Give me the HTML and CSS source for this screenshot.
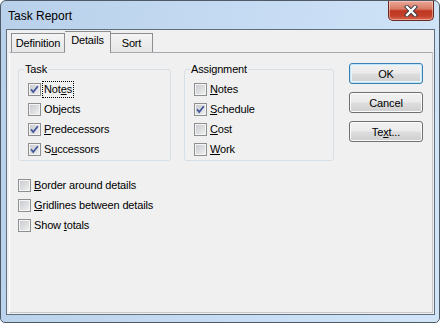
FILE: index.html
```html
<!DOCTYPE html>
<html>
<head>
<meta charset="utf-8">
<link rel="stylesheet" href="styles.css">
</head>
<body>
<div class="window">
  <div class="titlebar">
    <span class="title">Task Report</span>
    <div class="close">
      <svg width="14" height="12" viewBox="0 0 14 12">
        <path d="M3 2 L11 10 M11 2 L3 10" stroke="#3a3a44" stroke-width="4.2" stroke-linecap="square" fill="none"/>
        <path d="M3 2 L11 10 M11 2 L3 10" stroke="#ffffff" stroke-width="2.3" stroke-linecap="square" fill="none"/>
      </svg>
    </div>
  </div>
  <div class="client">
    <div class="tabs">
      <div class="tab t-def">Definition</div>
      <div class="tab selected t-det">Details</div>
      <div class="tab t-sort">Sort</div>
    </div>
    <div class="panel">
      <div class="top">
        <fieldset class="group task">
          <legend>Task</legend>
          <div class="row"><span class="cb"><svg viewBox="0 0 11 11" width="11" height="11"><path class="chk" d="M2 5.3 L4.2 8 L8.8 2.2"/></svg></span><span class="lbl focus">Not<u>e</u>s</span></div>
          <div class="row"><span class="cb"></span><span class="lbl">Ob<u>j</u>ects</span></div>
          <div class="row"><span class="cb"><svg viewBox="0 0 11 11" width="11" height="11"><path class="chk" d="M2 5.3 L4.2 8 L8.8 2.2"/></svg></span><span class="lbl"><u>P</u>redecessors</span></div>
          <div class="row"><span class="cb"><svg viewBox="0 0 11 11" width="11" height="11"><path class="chk" d="M2 5.3 L4.2 8 L8.8 2.2"/></svg></span><span class="lbl">S<u>u</u>ccessors</span></div>
        </fieldset>
        <fieldset class="group assign">
          <legend>Assignment</legend>
          <div class="row"><span class="cb"></span><span class="lbl"><u>N</u>otes</span></div>
          <div class="row"><span class="cb"><svg viewBox="0 0 11 11" width="11" height="11"><path class="chk" d="M2 5.3 L4.2 8 L8.8 2.2"/></svg></span><span class="lbl"><u>S</u>chedule</span></div>
          <div class="row"><span class="cb"></span><span class="lbl"><u>C</u>ost</span></div>
          <div class="row"><span class="cb"></span><span class="lbl"><u>W</u>ork</span></div>
        </fieldset>
        <div class="buttons">
          <button class="btn default">OK</button>
          <button class="btn">Cancel</button>
          <button class="btn">Te<u>x</u>t...</button>
        </div>
      </div>
      <div class="options">
        <div class="row"><span class="cb"></span><span class="lbl"><u>B</u>order around details</span></div>
        <div class="row"><span class="cb"></span><span class="lbl"><u>G</u>ridlines between details</span></div>
        <div class="row"><span class="cb"></span><span class="lbl">Show <u>t</u>otals</span></div>
      </div>
    </div>
  </div>
</div>
</body>
</html>
```
FILE: styles.css
```css
html, body {
  margin: 0;
  padding: 0;
  background: #ffffff;
}

.window {
  box-sizing: border-box;
  width: 440px;
  height: 323px;
  border: 1px solid #4e5a66;
  border-radius: 6px 6px 5px 5px;
  background: linear-gradient(100deg, #b8d0ea 0%, #c4daf2 45%, #d2e5f8 100%);
  padding: 0 4px 7px 5px;
  display: flex;
  flex-direction: column;
  font-family: "Liberation Sans", Arial, sans-serif;
  font-size: 11px;
  letter-spacing: -0.15px;
  color: #000;
}

.titlebar {
  height: 28px;
  display: flex;
  justify-content: space-between;
  align-items: flex-start;
}

.title {
  font-size: 12px;
  line-height: 15px;
  margin-top: 8px;
  padding-left: 2px;
  letter-spacing: 0;
  color: #000;
}

.close {
  box-sizing: border-box;
  width: 46px;
  height: 20px;
  margin-right: 1px;
  border: 1px solid #6b2a1f;
  border-top: none;
  border-radius: 0 0 5px 5px;
  background: linear-gradient(#e9a898 0%, #d97a66 42%, #bf3620 52%, #c4402a 78%, #d86a52 100%);
  box-shadow: inset 0 0 0 1px rgba(255, 220, 210, 0.5);
  display: flex;
  align-items: center;
  justify-content: center;
}

.client {
  flex: 1;
  box-sizing: border-box;
  border: 1px solid #5f6f80;
  background: #f0f0f0;
  padding: 1px 1px 1px 2px;
  display: flex;
  flex-direction: column;
}

.tabs {
  display: flex;
  align-items: flex-end;
  height: 22px;
  margin-left: 2px;
  margin-bottom: -1px;
  position: relative;
  z-index: 1;
}

.tab {
  box-sizing: border-box;
  height: 19px;
  margin-bottom: 1px;
  border: 1px solid #8c8e94;
  border-bottom: none;
  background: linear-gradient(#f4f4f4, #e6e6e6);
  text-align: center;
  line-height: 13px;
  padding-top: 3px;
}

.t-def { width: 54px; }
.t-det { width: 46px; }
.t-sort { width: 42px; border-left: none; }

.tab.selected {
  height: 22px;
  margin-bottom: 0;
  background: #f0f0f0;
  padding-top: 2px;
  border-left: none;
}

.panel {
  flex: 1;
  box-sizing: border-box;
  border: 1px solid #a9abb0;
  border-left-color: #ffffff;
  border-right-color: #c8c8c8;
  border-bottom-color: #c8c8c8;
  background: #f0f0f0;
  padding: 10px 0 0 8px;
}

.top {
  display: flex;
  align-items: flex-start;
}

.group {
  box-sizing: border-box;
  margin: 0;
  min-width: 0;
  border: 1px solid #d5dfe5;
  border-radius: 3px;
  padding: 3px 4px 1px 5px;
}

.group legend {
  padding: 0 1px;
  line-height: 13px;
}

.task { width: 153px; }
.assign { width: 150px; margin-left: 13px; }

.group .row { padding-left: 4px; }

.row {
  display: flex;
  align-items: center;
  height: 20px;
  gap: 2px;
}

.cb {
  box-sizing: border-box;
  width: 13px;
  height: 13px;
  flex: none;
  border: 1px solid #8e8f8f;
  background: linear-gradient(135deg, #c4c8ce 0%, #dfe0e2 60%, #f4f4f4 100%);
  box-shadow: inset 0 0 0 1px #f4f4f4;
  display: flex;
}

.cb svg { display: block; }

.chk {
  fill: none;
  stroke: #45589a;
  stroke-width: 1.8;
}

.lbl {
  padding: 0 1px;
  line-height: 13px;
  white-space: nowrap;
}

.lbl.focus {
  outline: 1px dotted #000;
  outline-offset: 0;
  padding-top: 1px;
  padding-bottom: 1px;
}

.buttons {
  display: flex;
  flex-direction: column;
  gap: 8px;
  margin-left: 15px;
  width: 74px;
}

.btn {
  box-sizing: border-box;
  height: 21px;
  width: 74px;
  margin: 0;
  padding: 0;
  font-family: "Liberation Sans", Arial, sans-serif;
  font-size: 11px;
  letter-spacing: -0.15px;
  color: #000;
  border: 1px solid #707070;
  border-radius: 3px;
  background: linear-gradient(#f2f2f2 0%, #ebebeb 48%, #dddddd 52%, #cfcfcf 100%);
  box-shadow: inset 0 0 0 1px #fbfbfb;
}

.btn.default {
  border-color: #3c7fb1;
  box-shadow: inset 0 0 0 1px #c4e5f6, inset 0 0 0 2px #e8f5fc;
}

.options {
  margin-top: 14px;
}
```
